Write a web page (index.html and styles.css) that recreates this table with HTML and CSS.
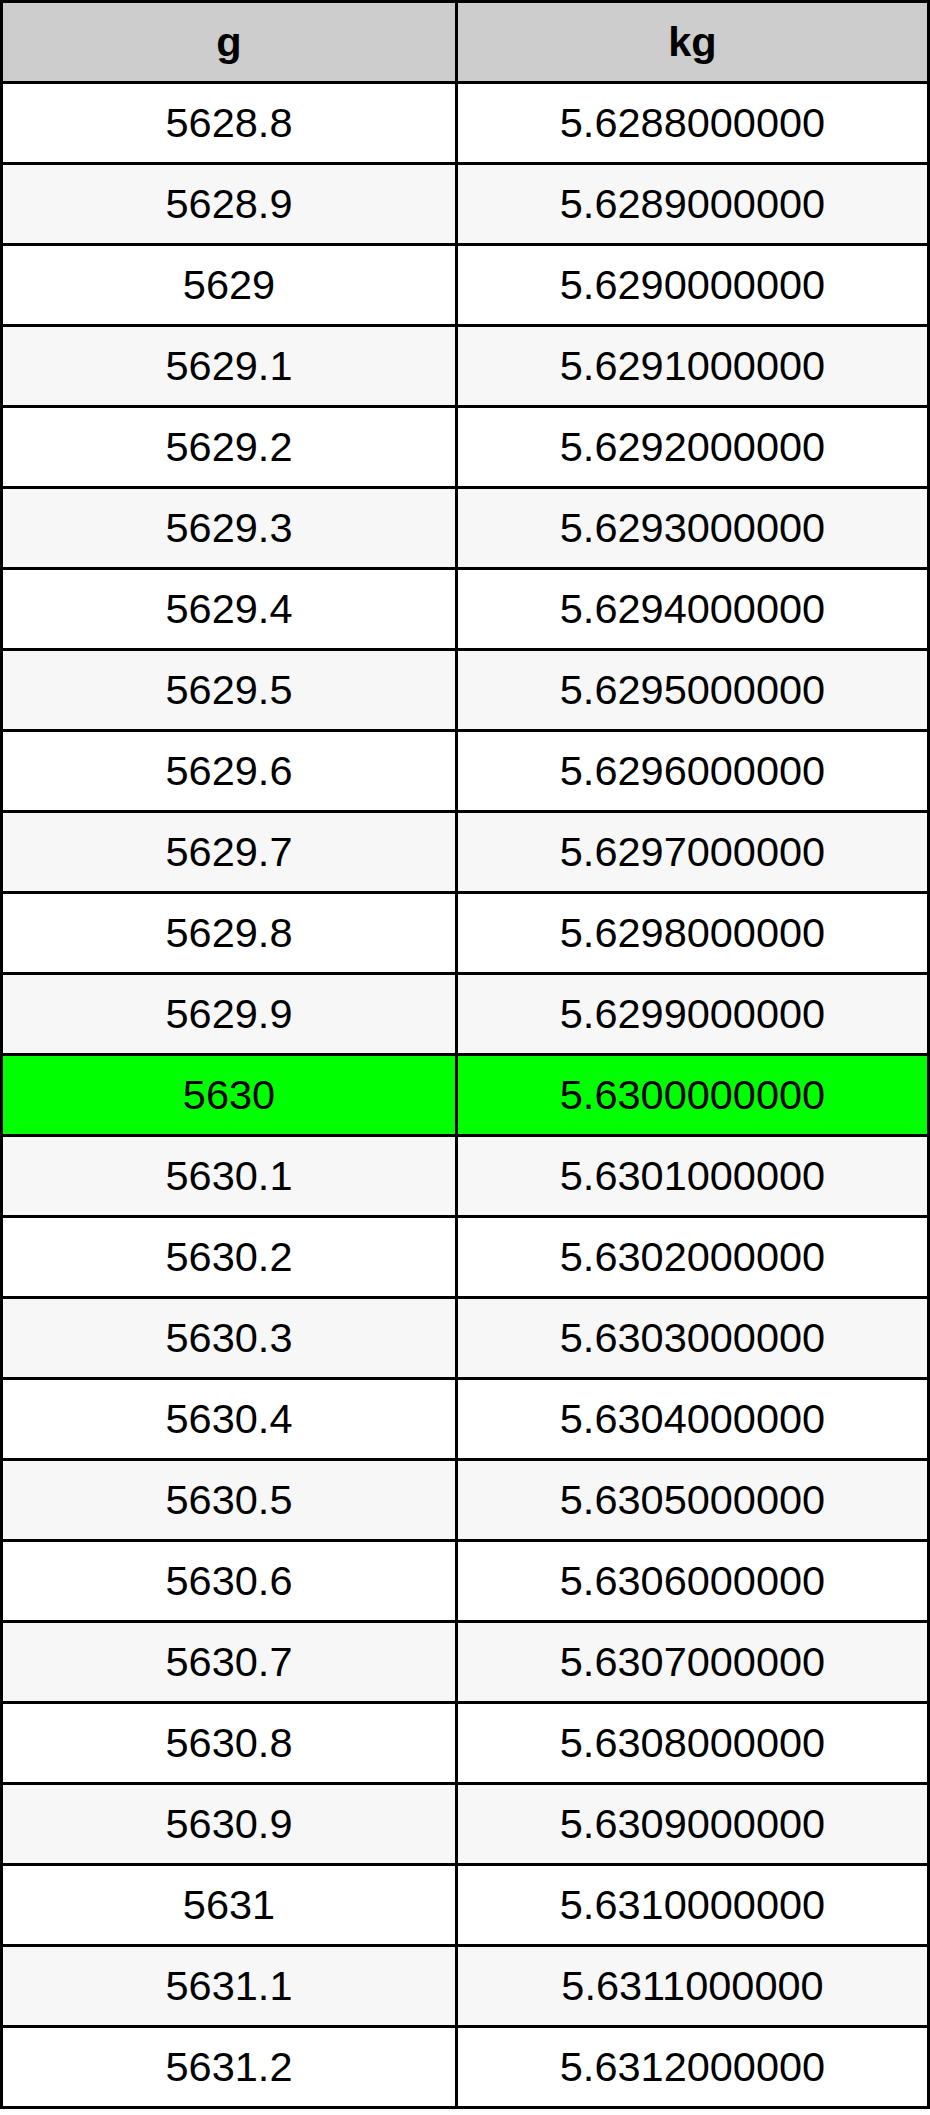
FILE: index.html
```html
<!DOCTYPE html>
<html lang="en">
<head>
<meta charset="utf-8">
<title>g to kg</title>
<link rel="stylesheet" href="styles.css">
</head>
<body>
<table class="conv">
<thead>
<tr><th class="col-g">g</th><th class="col-kg">kg</th></tr>
</thead>
<tbody>
<tr><td>5628.8</td><td>5.6288000000</td></tr>
<tr><td>5628.9</td><td>5.6289000000</td></tr>
<tr><td>5629</td><td>5.6290000000</td></tr>
<tr><td>5629.1</td><td>5.6291000000</td></tr>
<tr><td>5629.2</td><td>5.6292000000</td></tr>
<tr><td>5629.3</td><td>5.6293000000</td></tr>
<tr><td>5629.4</td><td>5.6294000000</td></tr>
<tr><td>5629.5</td><td>5.6295000000</td></tr>
<tr><td>5629.6</td><td>5.6296000000</td></tr>
<tr><td>5629.7</td><td>5.6297000000</td></tr>
<tr><td>5629.8</td><td>5.6298000000</td></tr>
<tr><td>5629.9</td><td>5.6299000000</td></tr>
<tr class="hl"><td>5630</td><td>5.6300000000</td></tr>
<tr><td>5630.1</td><td>5.6301000000</td></tr>
<tr><td>5630.2</td><td>5.6302000000</td></tr>
<tr><td>5630.3</td><td>5.6303000000</td></tr>
<tr><td>5630.4</td><td>5.6304000000</td></tr>
<tr><td>5630.5</td><td>5.6305000000</td></tr>
<tr><td>5630.6</td><td>5.6306000000</td></tr>
<tr><td>5630.7</td><td>5.6307000000</td></tr>
<tr><td>5630.8</td><td>5.6308000000</td></tr>
<tr><td>5630.9</td><td>5.6309000000</td></tr>
<tr><td>5631</td><td>5.6310000000</td></tr>
<tr><td>5631.1</td><td>5.6311000000</td></tr>
<tr><td>5631.2</td><td>5.6312000000</td></tr>
</tbody>
</table>
</body>
</html>
```
FILE: styles.css
```css
html, body {
  margin: 0;
  padding: 0;
  background: #ffffff;
}
.conv {
  width: 930px;
  border-collapse: collapse;
  table-layout: fixed;
  font-family: "Liberation Sans", Arial, sans-serif;
  font-size: 41.5px;
  color: #000000;
}
.conv th,
.conv td {
  border: 3px solid #000000;
  height: 78px;
  padding: 0;
  text-align: center;
  vertical-align: middle;
  box-sizing: content-box;
}
.conv .col-g {
  width: 452px;
}
.conv .col-kg {
  width: 469px;
}
.conv th {
  background: #cdcdcd;
  font-weight: bold;
}
.conv tbody tr:nth-child(odd) td {
  background: #ffffff;
}
.conv tbody tr:nth-child(even) td {
  background: #f7f7f7;
}
.conv tbody tr.hl td {
  background: #00ff00;
}
```
